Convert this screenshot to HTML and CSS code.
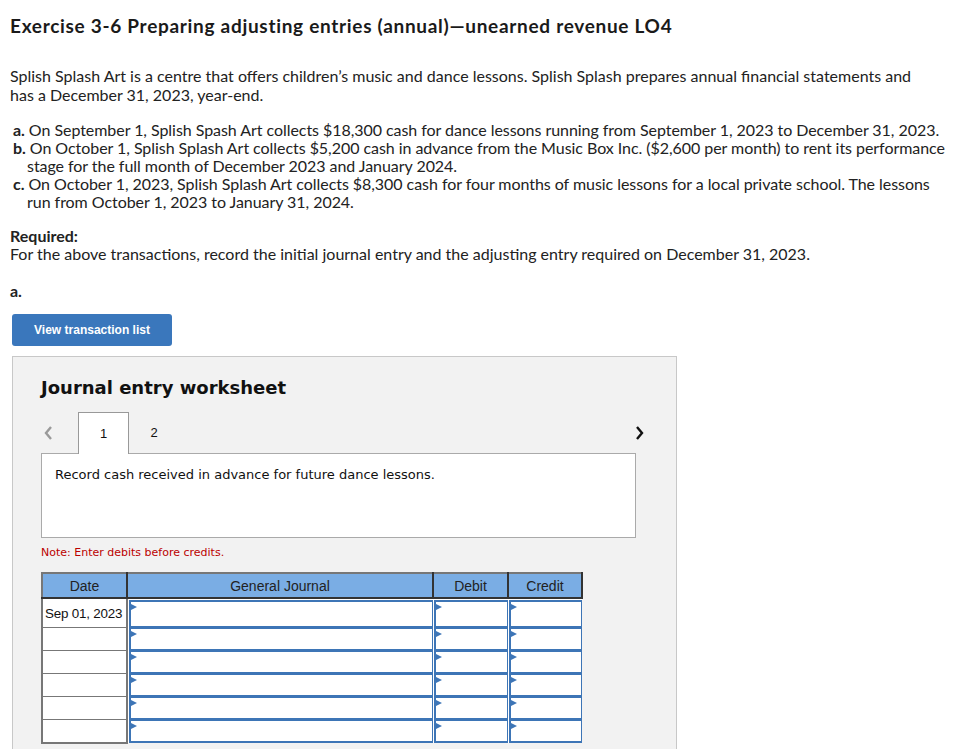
FILE: index.html
```html
<!DOCTYPE html>
<html lang="en">
<head>
    <meta charset="UTF-8">
    <title>Exercise 3-6</title>
    <link rel="stylesheet" href="styles.css">
</head>
<body>
    <h2 class="title">Exercise 3-6 Preparing adjusting entries (annual)—unearned revenue LO4</h2>

    <p class="intro">Splish Splash Art is a centre that offers children’s music and dance lessons. Splish Splash prepares annual financial statements and has a December 31, 2023, year-end.</p>

    <ul class="items">
        <li><b>a.</b> On September 1, Splish Spash Art collects $18,300 cash for dance lessons running from September 1, 2023 to December 31, 2023.</li>
        <li><b>b.</b> On October 1, Splish Splash Art collects $5,200 cash in advance from the Music Box Inc. ($2,600 per month) to rent its performance stage for the full month of December 2023 and January 2024.</li>
        <li><b>c.</b> On October 1, 2023, Splish Splash Art collects $8,300 cash for four months of music lessons for a local private school. The lessons run from October 1, 2023 to January 31, 2024.</li>
    </ul>

    <div class="required">
        <b>Required:</b><br>
        For the above transactions, record the initial journal entry and the adjusting entry required on December 31, 2023.
    </div>

    <div class="part">a.</div>

    <button class="btn-list">View transaction list</button>

    <div class="worksheet">
        <h3>Journal entry worksheet</h3>

        <div class="tabs">
            <span class="arrow prev">
                <svg width="10" height="16" viewBox="0 0 10 16"><path d="M8 2 L3 8 L8 14" fill="none" stroke="#9a9a9a" stroke-width="2.4"/></svg>
            </span>
            <span class="tab active">1</span>
            <span class="tab">2</span>
            <span class="arrow next">
                <svg width="10" height="16" viewBox="0 0 10 16"><path d="M2 2 L7 8 L2 14" fill="none" stroke="#111" stroke-width="2.4"/></svg>
            </span>
        </div>

        <div class="desc">Record cash received in advance for future dance lessons.</div>

        <div class="note">Note: Enter debits before credits.</div>

        <table class="journal">
            <colgroup>
                <col style="width: 85px">
                <col style="width: 306px">
                <col style="width: 75px">
                <col style="width: 74px">
            </colgroup>
            <thead>
                <tr>
                    <th>Date</th>
                    <th>General Journal</th>
                    <th>Debit</th>
                    <th>Credit</th>
                </tr>
            </thead>
            <tbody>
                <tr class="first">
                    <td class="date">Sep 01, 2023</td>
                    <td class="inp"><div></div></td>
                    <td class="inp"><div></div></td>
                    <td class="inp"><div></div></td>
                </tr>
                <tr>
                    <td class="date"></td>
                    <td class="inp"><div></div></td>
                    <td class="inp"><div></div></td>
                    <td class="inp"><div></div></td>
                </tr>
                <tr>
                    <td class="date"></td>
                    <td class="inp"><div></div></td>
                    <td class="inp"><div></div></td>
                    <td class="inp"><div></div></td>
                </tr>
                <tr>
                    <td class="date"></td>
                    <td class="inp"><div></div></td>
                    <td class="inp"><div></div></td>
                    <td class="inp"><div></div></td>
                </tr>
                <tr>
                    <td class="date"></td>
                    <td class="inp"><div></div></td>
                    <td class="inp"><div></div></td>
                    <td class="inp"><div></div></td>
                </tr>
                <tr>
                    <td class="date"></td>
                    <td class="inp"><div></div></td>
                    <td class="inp"><div></div></td>
                    <td class="inp"><div></div></td>
                </tr>
            </tbody>
        </table>
    </div>
</body>
</html>
```

FILE: styles.css
```css
body {
    margin: 0;
    padding: 0 4px 0 10px;
    font-family: 'Lato', sans-serif;
    font-size: 16px;
    color: #222;
}
.title {
    margin: 14px 0 0;
    font-size: 19px;
    letter-spacing: 0.7px;
    font-weight: bold;
    color: #1a1a1a;
    line-height: 24px;
}
.intro {
    margin: 28px 0 0;
    max-width: 922px;
    line-height: 19px;
}
.items {
    list-style: none;
    margin: 17px 0 0;
    padding: 0;
    line-height: 18px;
    letter-spacing: -0.05px;
}
.items li {
    padding-left: 17px;
    text-indent: -14px;
}
.required {
    margin-top: 16px;
    line-height: 18px;
}
.part {
    margin-top: 19px;
    font-weight: bold;
    line-height: 18px;
}
.btn-list {
    display: block;
    margin: 14px 0 0 2px;
    width: 160px;
    height: 32px;
    background-color: #3a77bc;
    color: white;
    border: none;
    border-radius: 3px;
    font-family: 'Liberation Sans', Arial, sans-serif;
    font-size: 12px;
    font-weight: bold;
}
.worksheet {
    margin: 10px 0 0 2px;
    width: 635px;
    height: 420px;
    padding: 18px 0 0 28px;
    background-color: #f2f2f2;
    border: 1px solid #c8c8c8;
    font-family: 'DejaVu Sans', Verdana, sans-serif;
}
.worksheet h3 {
    margin: 0;
    font-size: 18px;
    line-height: 26px;
    color: #111;
}
.tabs {
    display: flex;
    align-items: stretch;
    height: 41px;
    margin-top: 11px;
    width: 604px;
    font-family: 'Liberation Sans', Arial, sans-serif;
    font-size: 13px;
}
.arrow {
    display: flex;
    align-items: center;
    width: 35px;
    padding-left: 2px;
}
.arrow.next {
    margin-left: auto;
    width: auto;
    padding: 0;
}
.tab {
    display: flex;
    align-items: center;
    justify-content: center;
    width: 50px;
    color: #111;
}
.tab.active {
    background-color: white;
    border: 1px solid #999;
    border-bottom: none;
    width: 49px;
    position: relative;
    z-index: 1;
    margin-bottom: -1px;
}
.desc {
    width: 580px;
    height: 70px;
    padding: 13px 0 0 13px;
    background-color: white;
    border: 1px solid #aaa;
    font-size: 13px;
    color: #111;
}
.note {
    margin-top: 8px;
    font-size: 11px;
    color: #b00;
}
.journal {
    margin-top: 13px;
    width: 540px;
    table-layout: fixed;
    border-collapse: collapse;
    font-family: 'Liberation Sans', Arial, sans-serif;
    font-size: 14px;
}
.journal th {
    height: 23px;
    padding: 0;
    background-color: #7aade4;
    border: 2px solid #333;
    border-top-color: #777;
    border-left: 1px solid #333;
    font-weight: normal;
    color: #222;
    text-align: center;
}
.journal th:first-child {
    border-left: 2px solid #777;
}
.journal td {
    padding: 0;
    height: 22px;
    background-color: white;
}
.journal tr.first td {
    height: 28px;
}
.journal td.date {
    border: 2px solid #777;
    border-top-width: 1px;
    border-bottom-width: 1px;
    padding: 0 0 0 2px;
    font-size: 13.4px;
    letter-spacing: -0.2px;
    color: #111;
    white-space: nowrap;
    overflow: hidden;
}
.journal tr:last-child td.date {
    border-bottom-width: 2px;
}
.journal td.inp {
    border: none;
    position: relative;
}
.journal td.inp div {
    position: absolute;
    inset: 0 0 0 1px;
    border: 2px solid #3d75b6;
    border-right-width: 1px;
    border-top-width: 1px;
    background-color: white;
}
.journal tr.first td.inp div {
    top: 1px;
    border-top-width: 2px;
}
.journal td.inp div::before {
    content: '';
    position: absolute;
    top: 2px;
    left: 0;
    border-left: 6px solid #3d75b6;
    border-top: 3px solid transparent;
    border-bottom: 3px solid transparent;
}
```
